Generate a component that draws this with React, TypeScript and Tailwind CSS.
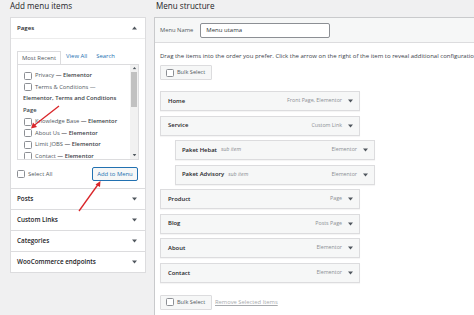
import React from "react";

const FONT = { fontFamily: '"Open Sans", "Noto Sans", sans-serif' };

function Cb({ cls = "" }: { cls?: string }) {
  return <span className={`block w-[8px] h-[8px] border border-[#8c8f94] rounded-[1.5px] bg-white shrink-0 ${cls}`} />;
}

function Down({ cls = "" }: { cls?: string }) {
  return (
    <svg width="5" height="4" viewBox="0 0 5 4" className={cls}>
      <path d="M0 0.5 L5 0.5 L2.5 3.5 Z" fill="#50575e" />
    </svg>
  );
}
function Up({ cls = "" }: { cls?: string }) {
  return (
    <svg width="5" height="4" viewBox="0 0 5 4" className={cls}>
      <path d="M0 3.5 L5 3.5 L2.5 0.5 Z" fill="#50575e" />
    </svg>
  );
}

function ListRow({ children, box = true }: { children: React.ReactNode; box?: boolean }) {
  return (
    <div className="h-[11.5px] flex items-center pl-[6px] gap-[3px] whitespace-nowrap text-[5.8px] text-[#50575e]">
      {box && <Cb />}
      <span>{children}</span>
    </div>
  );
}

function MenuItem({ title, type, sub = false }: { title: string; type: string; sub?: boolean }) {
  return (
    <div
      className={`h-[20px] w-[200px] ${sub ? "ml-[15px] pl-[6px]" : "pl-[7px]"} pr-[6px] flex items-center bg-[#f6f7f7] border border-[#dcdcde] shadow-[0_1px_1px_rgba(0,0,0,0.04)]`}
    >
      <span className="text-[5.9px] font-semibold text-[#1d2327]">{title}</span>
      {sub && <span className="ml-[4px] text-[5.3px] italic text-[#8c8f94]">sub item</span>}
      <span className="ml-auto text-[5.3px] text-[#8c8f94]">{type}</span>
      <Down cls="ml-[6px]" />
    </div>
  );
}

function Accordion({ label }: { label: string }) {
  return (
    <div className="h-[21px] border-t border-[#dcdcde] flex items-center pl-[6px] pr-[8px]">
      <span className="text-[6.3px] font-semibold text-[#1d2327]">{label}</span>
      <Down cls="ml-auto" />
    </div>
  );
}

export default function App() {
  return (
    <div className="relative w-[474px] h-[315px] overflow-hidden bg-[#f0f0f1] flex" style={FONT}>
      {/* Left column */}
      <div className="w-[154px] shrink-0 pl-[10px]">
        <div className="h-[17px] text-[8.1px] leading-[12px] text-[#1d2327]">Add menu items</div>
        <div className="w-[136px] bg-white border border-[#dcdcde]">
          <div className="h-[21px] flex items-center pl-[6px] pr-[8px] border-b border-[#ececec]">
            <span className="text-[6.1px] font-semibold text-[#1d2327]">Pages</span>
            <Up cls="ml-auto" />
          </div>
          <div className="pl-[6px] pr-[6px] pt-[11px]">
            <div className="flex items-end h-[14px] text-[5.9px]">
              <div className="h-[14px] px-[4px] flex items-center border border-b-0 border-[#dcdcde] bg-white text-[#50575e] relative top-[1px]">
                Most Recent
              </div>
              <span className="ml-[5px] mb-[3.5px] text-[#2271b1]">View All</span>
              <span className="ml-[9px] mb-[3.5px] text-[#2271b1]">Search</span>
            </div>
            <div className="relative h-[96px] border border-[#dcdcde] pt-[5px] overflow-hidden">
              <ListRow>
                Privacy <span className="font-semibold text-[#3c434a]">— Elementor</span>
              </ListRow>
              <ListRow>Terms &amp; Conditions —</ListRow>
              <div className="h-[11.5px] flex items-center pl-[5px] whitespace-nowrap text-[5.8px] font-semibold text-[#3c434a]">
                Elementor, Terms and Conditions
              </div>
              <div className="h-[11.5px] flex items-center pl-[5px] whitespace-nowrap text-[5.8px] font-semibold text-[#3c434a]">
                Page
              </div>
              <ListRow>
                Knowledge Base <span className="font-semibold text-[#3c434a]">— Elementor</span>
              </ListRow>
              <ListRow>
                About Us <span className="font-semibold text-[#3c434a]">— Elementor</span>
              </ListRow>
              <ListRow>
                Limit JOBS <span className="font-semibold text-[#3c434a]">— Elementor</span>
              </ListRow>
              <ListRow>
                Contact <span className="font-semibold text-[#3c434a]">— Elementor</span>
              </ListRow>
              {/* scrollbar */}
              <div className="absolute right-0 top-0 bottom-0 w-[8px] bg-[#f1f1f1] flex flex-col items-center">
                <Up cls="mt-[1px] scale-75" />
                <div className="mt-[2px] w-[6px] h-[35px] bg-[#c1c1c1]" />
                <div className="flex-1" />
                <Down cls="mb-[2px] scale-75" />
              </div>
            </div>
          </div>
          <div className="h-[28px] flex items-center pl-[6px] pr-[7px]">
            <Cb />
            <span className="ml-[3px] text-[5.9px] text-[#50575e]">Select All</span>
            <div className="ml-auto h-[14px] w-[46px] flex items-center justify-center border border-[#2271b1] rounded-[2px] bg-[#f6f7f7] text-[5.9px] text-[#2271b1]">
              Add to Menu
            </div>
          </div>
          <Accordion label="Posts" />
          <Accordion label="Custom Links" />
          <Accordion label="Categories" />
          <Accordion label="WooCommerce endpoints" />
        </div>
      </div>

      {/* Right column */}
      <div className="flex-1 flex flex-col min-w-0">
        <div className="h-[17px] pl-[2px] text-[8.1px] leading-[12px] text-[#1d2327]">Menu structure</div>
        <div className="flex-1 border-l border-t border-[#c9cacc] bg-white">
          <div className="h-[25px] bg-[#f6f7f7] border-b border-[#dcdcde] flex items-center pl-[5px]">
            <span className="text-[5.8px] text-[#50575e]">Menu Name</span>
            <div className="ml-[7px] w-[130px] h-[15px] border border-[#8c8f94] rounded-[2px] bg-white flex items-center pl-[5px] text-[6px] text-[#2c3338]">
              Menu utama
            </div>
          </div>
          <div className="pl-[5px]">
            <div className="mt-[9px] h-[8px] leading-[8px] whitespace-nowrap text-[6px] text-[#3c434a]">
              Drag the items into the order you prefer. Click the arrow on the right of the item to reveal additional configuration options.
            </div>
            <div className="mt-[5px] h-[15px] w-[52px] flex items-center pl-[5px] bg-[#f6f7f7] border border-[#dcdcde] rounded-[1px]">
              <Cb />
              <span className="ml-[3px] text-[5.6px] text-[#50575e]">Bulk Select</span>
            </div>
            <div className="mt-[11px] flex flex-col gap-[4.57px]">
              <MenuItem title="Home" type="Front Page, Elementor" />
              <MenuItem title="Service" type="Custom Link" />
              <MenuItem title="Paket Hebat" type="Elementor" sub />
              <MenuItem title="Paket Advisory" type="Elementor" sub />
              <MenuItem title="Product" type="Page" />
              <MenuItem title="Blog" type="Posts Page" />
              <MenuItem title="About" type="Elementor" />
              <MenuItem title="Contact" type="Elementor" />
            </div>
            <div className="mt-[12px] flex items-center">
              <div className="h-[15px] w-[52px] flex items-center pl-[5px] bg-[#f6f7f7] border border-[#dcdcde] rounded-[1px]">
                <Cb />
                <span className="ml-[3px] text-[5.6px] text-[#50575e]">Bulk Select</span>
              </div>
              <span className="ml-[3px] text-[5.8px] text-[#a7aaad] underline">Remove Selected Items</span>
            </div>
          </div>
        </div>
      </div>

      {/* red arrows */}
      <svg className="absolute left-0 top-0 pointer-events-none" width="474" height="315">
        <line x1="59" y1="106" x2="34" y2="125.5" stroke="#d9262a" strokeWidth="1.3" />
        <path d="M31 128.5 L33 122.5 L37 127 Z" fill="#d9262a" />
        <line x1="79" y1="211" x2="98" y2="184.5" stroke="#d9262a" strokeWidth="1.3" />
        <path d="M100.5 181 L95.5 184.5 L100 187 Z" fill="#d9262a" />
      </svg>
    </div>
  );
}
